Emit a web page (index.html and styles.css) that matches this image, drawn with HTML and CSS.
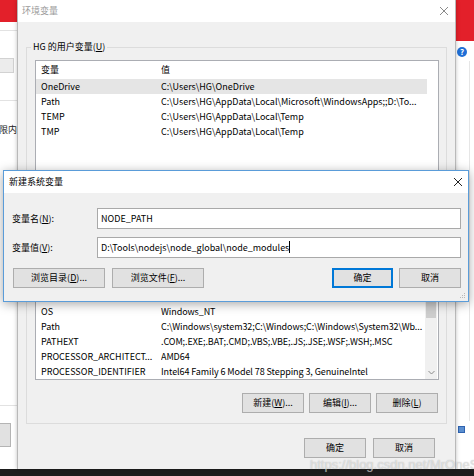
FILE: index.html
```html
<!DOCTYPE html>
<html>
<head>
<meta charset="utf-8">
<title>环境变量</title>
<link rel="stylesheet" href="styles.css">
</head>
<body>
<div class="desk">

  <div class="bgwin bg-left">
    <div class="bg-red"></div>
    <div class="hl bl-l1"></div>
    <div class="bl-tab"></div>
    <div class="hl bl-l2"></div>
    <div class="bl-text"><span>权限内</span></div>
    <div class="hl bl-l3"></div>
    <div class="bl-btn"></div>
  </div>

  <div class="bgwin bg-right">
    <div class="bg-red tall"></div>
    <div class="help">?</div>
    <div class="br-line"></div>
    <div class="br-icon"></div>
  </div>

  <div class="win main">
    <div class="titlebar">
      <span class="title inactive">环境变量</span>
      <svg class="close" width="10" height="10" viewBox="0 0 10 10"><path d="M1 1L9 9M9 1L1 9" stroke="#8a8a8a" stroke-width="1" fill="none"/></svg>
    </div>
    <div class="wbody">
      <fieldset class="group user">
        <legend>HG 的用户变量(<u>U</u>)</legend>
        <div class="list ulist">
          <div class="row head"><span class="c1">变量</span><span class="c2">值</span></div>
          <div class="row sel"><span class="c1">OneDrive</span><span class="c2">C:\Users\HG\OneDrive</span></div>
          <div class="row"><span class="c1">Path</span><span class="c2">C:\Users\HG\AppData\Local\Microsoft\WindowsApps;;D:\To...</span></div>
          <div class="row"><span class="c1">TEMP</span><span class="c2">C:\Users\HG\AppData\Local\Temp</span></div>
          <div class="row"><span class="c1">TMP</span><span class="c2">C:\Users\HG\AppData\Local\Temp</span></div>
        </div>
        <div class="btnrow">
          <button class="btn w62">新建(<u>N</u>)...</button>
          <button class="btn w62">编辑(<u>E</u>)...</button>
          <button class="btn w62">删除(<u>D</u>)</button>
        </div>
      </fieldset>

      <fieldset class="group sys">
        <legend>系统变量(<u>S</u>)</legend>
        <div class="list slist">
          <div class="scols">
            <div class="row head"><span class="c1">变量</span><span class="c2">值</span></div>
            <div class="row"><span class="c1">ComSpec</span><span class="c2">C:\Windows\system32\cmd.exe</span></div>
            <div class="row"><span class="c1">DriverData</span><span class="c2">C:\Windows\System32\Drivers\DriverData</span></div>
            <div class="row"><span class="c1">NUMBER_OF_PROCESSORS</span><span class="c2">4</span></div>
            <div class="row"><span class="c1">OS</span><span class="c2">Windows_NT</span></div>
            <div class="row"><span class="c1">Path</span><span class="c2">C:\Windows\system32;C:\Windows;C:\Windows\System32\Wb...</span></div>
            <div class="row"><span class="c1">PATHEXT</span><span class="c2">.COM;.EXE;.BAT;.CMD;.VBS;.VBE;.JS;.JSE;.WSF;.WSH;.MSC</span></div>
            <div class="row"><span class="c1">PROCESSOR_ARCHITECT...</span><span class="c2">AMD64</span></div>
            <div class="row"><span class="c1">PROCESSOR_IDENTIFIER</span><span class="c2">Intel64 Family 6 Model 78 Stepping 3, GenuineIntel</span></div>
          </div>
          <div class="vscroll">
            <div class="sb-arrow"><svg width="7" height="5" viewBox="0 0 7 5"><path d="M0.5 4L3.5 1L6.5 4" stroke="#9a9a9a" fill="none"/></svg></div>
            <div class="sb-thumb"></div>
            <div class="sb-track"></div>
            <div class="sb-arrow"><svg width="7" height="5" viewBox="0 0 7 5"><path d="M0.5 1L3.5 4L6.5 1" stroke="#8a8a8a" fill="none"/></svg></div>
          </div>
        </div>
        <div class="btnrow">
          <button class="btn w62">新建(<u>W</u>)...</button>
          <button class="btn w62">编辑(<u>I</u>)...</button>
          <button class="btn w62">删除(<u>L</u>)</button>
        </div>
      </fieldset>

      <div class="footer">
        <button class="btn w62">确定</button>
        <button class="btn w62">取消</button>
      </div>
    </div>
  </div>

  <div class="win newdlg">
    <div class="titlebar nt">
      <span class="title">新建系统变量</span>
      <svg class="close" width="10" height="10" viewBox="0 0 10 10"><path d="M1 1L9 9M9 1L1 9" stroke="#222" stroke-width="1" fill="none"/></svg>
    </div>
    <div class="nbody">
      <div class="frow">
        <label class="flabel">变量名(<u>N</u>):</label>
        <div class="input">NODE_PATH</div>
      </div>
      <div class="frow">
        <label class="flabel">变量值(<u>V</u>):</label>
        <div class="input">D:\Tools\nodejs\node_global\node_modules<span class="caret"></span></div>
      </div>
      <div class="nbtns">
        <button class="btn w92">浏览目录(<u>D</u>)...</button>
        <button class="btn w92">浏览文件(<u>F</u>)...</button>
        <div class="grow"></div>
        <button class="btn w61 default">确定</button>
        <button class="btn w62">取消</button>
      </div>
    </div>
    <svg class="grip" width="6" height="6" viewBox="0 0 6 6"><rect x="4" y="0" width="1" height="1" fill="#b8b8b8"/><rect x="2" y="2" width="1" height="1" fill="#b8b8b8"/><rect x="4" y="2" width="1" height="1" fill="#b8b8b8"/><rect x="0" y="4" width="1" height="1" fill="#b8b8b8"/><rect x="2" y="4" width="1" height="1" fill="#b8b8b8"/><rect x="4" y="4" width="1" height="1" fill="#b8b8b8"/></svg>
  </div>

  <div class="watermark">https://blog.csdn.net/MrOneSun</div>
</div>
</body>
</html>
```

FILE: styles.css
```css
* { box-sizing: border-box; }
html, body { margin: 0; padding: 0; }
body {
  width: 474px;
  height: 476px;
  overflow: hidden;
  background: #1d1d1d;
  font-family: "Noto Sans CJK SC", "Noto Sans", sans-serif;
  font-size: 9px;
  color: #000;
}
.desk {
  position: relative;
  width: 474px;
  height: 476px;
  overflow: hidden;
  background: #1d1d1d;
}
u { text-decoration: underline; text-underline-offset: 1px; }

/* background windows */
.bgwin {
  position: absolute;
  top: 0;
  height: 469px;
  background: #fff;
  display: flex;
  flex-direction: column;
  overflow: hidden;
}
.bg-left { left: 0; width: 17px; }
.bg-right { left: 456px; width: 18px; }
.bg-red { height: 22px; background: #e3202a; flex: none; }
.bg-red.tall { height: 41px; }
.hl { height: 1px; background: #e2e2e2; flex: none; }
.bl-l1 { margin-top: 8px; }
.bl-tab {
  margin-top: 27px;
  height: 15px;
  width: 14px;
  background: #ececec;
  border: 1px solid #d2d2d2;
  border-left: none;
  flex: none;
}
.bl-l2 { margin-top: 27px; }
.bl-text {
  margin-top: 23px;
  height: 12px;
  line-height: 12px;
  display: flex;
  justify-content: flex-end;
  overflow: hidden;
  color: #222;
  flex: none;
}
.bl-text span { flex: none; white-space: nowrap; }
.bl-l3 { margin-top: 269px; }
.bl-btn {
  margin-top: 17px;
  width: 11px;
  height: 24px;
  background: #e1e1e1;
  border: 1px solid #b4b4b4;
  border-left: none;
  flex: none;
}
.help {
  margin: 6px 0 0 1px;
  width: 10px;
  height: 10px;
  border-radius: 50%;
  background: #1f6fd6;
  color: #fff;
  font-size: 8px;
  font-weight: bold;
  line-height: 10px;
  text-align: center;
  flex: none;
}
.br-line {
  margin: 4px 0 0 13px;
  width: 1px;
  height: 360px;
  background: #e6e6e6;
  flex: none;
}
.br-icon {
  margin: 5px 0 0 2px;
  width: 7px;
  height: 7px;
  background: #5b8fd0;
  border: 1px solid #2f63b0;
  flex: none;
}

/* windows */
.win {
  position: absolute;
  display: flex;
  flex-direction: column;
  background: #f0f0f0;
}
.main {
  left: 17px;
  top: 0;
  width: 439px;
  height: 469px;
  border-left: 1px solid #b9b9b9;
  border-right: 1px solid #b9b9b9;
  box-shadow: 0 0 4px rgba(0,0,0,0.25);
}
.titlebar {
  height: 22px;
  flex: none;
  background: #fff;
  display: flex;
  align-items: center;
  padding-left: 4px;
  position: relative;
}
.title { line-height: 12px; }
.title.inactive { color: #9a9a9a; }
.close { position: absolute; right: 6px; top: 6px; }
.wbody {
  flex: 1;
  padding: 0 8px;
  display: flex;
  flex-direction: column;
}

/* group boxes */
.group {
  margin: 17px 0 0 0;
  padding: 5px 7px 10px 8px;
  border: 1px solid #dcdcdc;
  min-width: 0;
}
.group legend {
  padding: 0 2px;
  margin-left: -4px;
  line-height: 16px;
  height: 16px;
  color: #000;
}
.group.sys { margin-top: 4px; }

.list {
  background: #fff;
  border: 1px solid #abadb3;
  overflow: hidden;
}
.ulist { height: 115px; }
.slist { height: 140px; display: flex; }
.scols { flex: 1; min-width: 0; }
.row {
  display: flex;
  height: 15px;
  line-height: 15px;
  white-space: nowrap;
}
.row.head { height: 18px; line-height: 18px; }
.row.sel { background: #e5e5e5; width: 391px; }
.c1 { width: 125px; flex: none; padding-left: 5px; overflow: hidden; }
.c2 { flex: 1; min-width: 0; overflow: hidden; }
.slist .c2 { letter-spacing: -0.08px; }

.vscroll {
  width: 12px;
  flex: none;
  display: flex;
  flex-direction: column;
  background: #f0f0f0;
  margin: 0 1px 0 0;
}
.sb-arrow {
  height: 14px;
  flex: none;
  display: flex;
  align-items: center;
  justify-content: center;
}
.sb-thumb {
  margin: 2px 1px 0;
  height: 61px;
  flex: none;
  background: #cdcdcd;
}
.sb-track { flex: 1; }

.btnrow {
  display: flex;
  justify-content: flex-end;
  gap: 5px;
  margin-top: 13px;
  padding-right: 1px;
}
.user .btnrow { margin-top: 9px; }

.btn {
  height: 20px;
  padding: 0;
  font: inherit;
  color: #000;
  background: #e1e1e1;
  border: 1px solid #adadad;
  line-height: 18px;
  text-align: center;
  white-space: nowrap;
}
.w62 { width: 62px; }
.w61 { width: 61px; }
.w92 { width: 92px; }
.btn.default { border-color: #0078d7; box-shadow: inset 0 0 0 1px #0078d7; }

.footer {
  display: flex;
  justify-content: flex-end;
  gap: 7px;
  margin-top: 14px;
  padding-right: 12px;
}

/* new variable dialog */
.newdlg {
  left: 3px;
  top: 170px;
  width: 466px;
  height: 132px;
  border: 1px solid #5a9cd9;
  box-shadow: 0 2px 10px rgba(0,0,0,0.35);
}
.titlebar.nt { height: 22px; padding-left: 5px; }
.titlebar.nt .close { right: 5px; top: 6px; }
.nbody {
  flex: 1;
  padding: 15px 7px 0 8px;
  display: flex;
  flex-direction: column;
  gap: 8px;
}
.frow { display: flex; align-items: center; height: 21px; }
.flabel { width: 85px; flex: none; }
.input {
  flex: 1;
  height: 21px;
  background: #fff;
  border: 1px solid #a9a9a9;
  line-height: 19px;
  padding-left: 3px;
  white-space: nowrap;
}
.caret {
  display: inline-block;
  width: 1px;
  height: 12px;
  background: #000;
  vertical-align: -2px;
}
.nbtns {
  display: flex;
  gap: 7px;
  margin-top: 2px;
  padding-left: 1px;
}
.nbtns .w61 + .w62 { margin-left: -1px; }
.grow { flex: 1; }
.grip { position: absolute; right: 2px; bottom: 2px; }

.watermark {
  position: absolute;
  left: 310px;
  top: 457px;
  font-family: "Liberation Sans", sans-serif;
  font-size: 13px;
  color: rgba(255,255,255,0.55);
  text-shadow: 0 0 1px rgba(120,120,120,0.6);
  white-space: nowrap;
}
```
